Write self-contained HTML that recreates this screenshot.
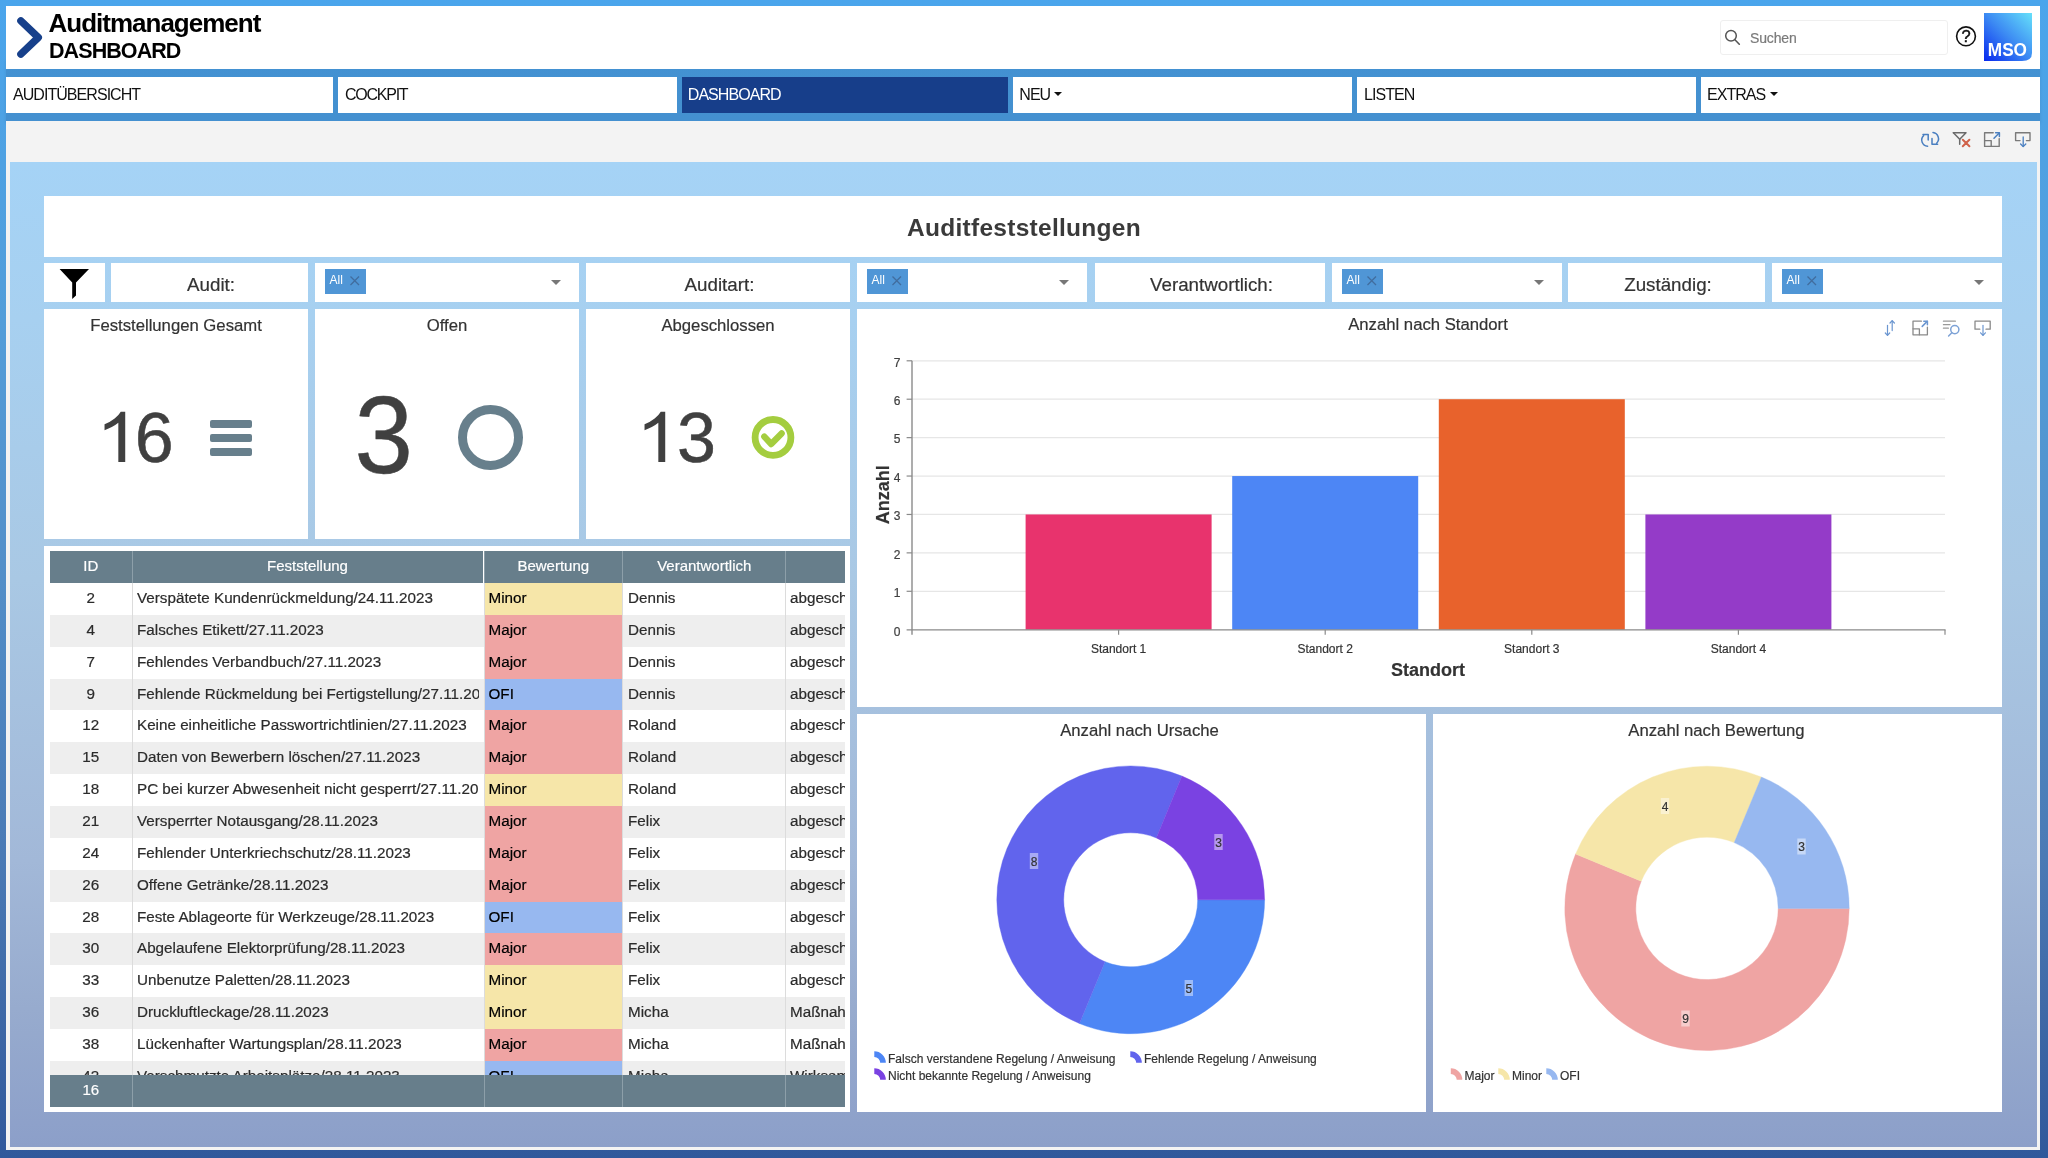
<!DOCTYPE html>
<html lang="de">
<head>
<meta charset="utf-8">
<title>Auditmanagement Dashboard</title>
<style>
*{box-sizing:border-box;margin:0;padding:0}
html,body{width:2048px;height:1158px;overflow:hidden}
body{font-family:"Liberation Sans",sans-serif;color:#333;background:linear-gradient(to bottom,rgb(74,165,236) 0%,rgb(82,157,217) 27.7%,rgb(82,142,200) 50%,rgb(74,122,181) 74%,rgb(63,105,167) 87%,rgb(48,88,155) 100%);position:relative;will-change:transform}
.abs{position:absolute}
.w{background:#fff}
/* header */
#hdr{left:6px;top:6px;width:2034px;height:63px;background:#fff}
#band{left:6px;top:60px;width:2034px;height:64px;background:rgba(0,10,40,.115);box-shadow:0 0 3px rgba(0,10,40,.1)}
#hdr .t1{left:42.5px;top:2px;font-size:26px;font-weight:bold;color:#000;line-height:30px;white-space:nowrap;letter-spacing:-1px}
#hdr .t2{left:43px;top:32px;font-size:21.5px;font-weight:bold;color:#000;line-height:26px;white-space:nowrap;letter-spacing:-.92px}
/* nav */
.nav{top:77px;height:36px;background:#fff;font-size:16px;line-height:36px;color:#111;padding-left:7px;white-space:nowrap;letter-spacing:-.95px}
.nav.act{background:#173e8a;color:#fff}
.nav .car{display:inline-block;width:0;height:0;border-left:4px solid transparent;border-right:4px solid transparent;border-top:4.5px solid #111;vertical-align:middle;margin-left:4px;margin-top:-3px}
/* work area */
#grey{left:6px;top:121px;width:2034px;height:1029px;background:#f3f3f3}
#panel{left:10px;top:162px;width:2027px;height:985px;background:linear-gradient(to bottom,rgb(165,211,246) 0%,rgb(167,208,240) 16%,rgb(169,200,228) 42.4%,rgb(162,184,216) 70.9%,rgb(151,171,206) 86%,rgb(140,159,201) 100%)}
/* cards */
.card{background:#fff}
.flabel{top:263px;height:39.3px;background:#fff;font-size:18.75px;line-height:39px;text-align:center;color:#333;padding-top:2px;padding-left:3px}
.fsel{top:263px;height:39.3px;background:#fff}
.tag{left:10px;top:6px;width:41px;height:25px;background:#5096d6;color:#fff;font-size:12px;line-height:23px;padding-left:4.6px;letter-spacing:0}
.tag i{position:absolute;left:23px;top:6px;width:11px;height:11px}
.fsel .dd{right:18px;top:17px;width:0;height:0;border-left:5.5px solid transparent;border-right:5.5px solid transparent;border-top:5.5px solid #777}
.kv{color:#404040;white-space:nowrap;-webkit-text-stroke:.5px #404040}
.kt{top:7.3px;left:0;width:100%;text-align:center;font-size:16.7px;line-height:20px;color:#333}

#tbl{left:50px;top:551px;width:794.5px;height:556px;overflow:hidden;font-size:15.22px;color:#2b2b2b;-webkit-text-stroke:.2px}
#tbl .th{top:0;height:32px;background:#677e8b;color:#fff;text-align:center;line-height:30px;font-size:15px}
#tb{left:0;top:32px;width:795px;height:492px;overflow:hidden}
#tbl .r{left:0;width:795px;height:31.86px;background:#fff;line-height:30.6px;white-space:nowrap}
#tbl .r.alt{background:#eee}
#tbl .c{top:0;height:31.86px;overflow:hidden}
.c1{left:0;width:81.5px;text-align:center}
.c2{left:87px;width:342px}
.c3{left:433.5px;width:138.7px;padding-left:5px;color:#000}
.c4{left:573px;width:162.5px;padding-left:5px}
.c5{left:736px;width:59px;padding-left:4px}
.minor{background:#f6e6a9}.major{background:#efa4a3}.ofi{background:#97b8f0}
.vl{top:0;width:1px;height:492px;background:#dcdcdc}
.hl{top:0;width:1px;height:32px;background:#8d9fa9}
.tf{left:0;top:524px;width:795px;height:32px;background:#677e8b}
.flabel,.kt{-webkit-text-stroke:.2px}
#bar text,#d1 text,#d2 text{stroke:#333;stroke-width:.2px}
</style>
</head>
<body>
<div id="band" class="abs"></div>
<!-- HEADER -->
<div id="hdr" class="abs">
  <svg class="abs" style="left:8px;top:8px" width="34" height="48" viewBox="0 0 34 48"><path d="M6.9 6.9 L24.3 23.5 L6.9 40.1" fill="none" stroke="#17408b" stroke-width="7.4" stroke-linecap="round" stroke-linejoin="round"/></svg>
  <div class="abs t1">Auditmanagement</div>
  <div class="abs t2">DASHBOARD</div>
  <div class="abs" style="left:1714px;top:14px;width:228px;height:35px;border:1px solid #efefef;border-radius:3px"></div>
  <svg class="abs" style="left:1716px;top:20px" width="24" height="24" viewBox="0 0 24 24"><circle cx="9" cy="9.8" r="5.3" fill="none" stroke="#555" stroke-width="1.5"/><path d="M12.9 13.8 L17.3 18.2" stroke="#555" stroke-width="1.6" stroke-linecap="round"/></svg>
  <div class="abs" style="left:1744px;top:22.7px;font-size:14px;line-height:18px;color:#7a7a7a;letter-spacing:-.15px;-webkit-text-stroke:.2px">Suchen</div>
  <svg class="abs" style="left:1948px;top:18px" width="24" height="24" viewBox="0 0 24 24"><circle cx="12" cy="12.3" r="9.4" fill="none" stroke="#111" stroke-width="1.6"/><text x="12" y="18.2" text-anchor="middle" font-family="Liberation Sans, sans-serif" font-size="16.5" fill="#111" stroke="#111" stroke-width=".45">?</text></svg>
  <svg class="abs" style="left:1978px;top:7px" width="48" height="48" viewBox="0 0 48 48"><defs><linearGradient id="lg" x1="1" y1="0" x2="0" y2="1"><stop offset="0" stop-color="#66e0fa"/><stop offset=".5" stop-color="#3c8af3"/><stop offset="1" stop-color="#0828ee"/></linearGradient></defs><path d="M0 0 H48 V40 Q48 48 38 48 H0 Z" fill="url(#lg)"/><text x="3.8" y="42.6" textLength="39.2" lengthAdjust="spacingAndGlyphs" font-family="Liberation Sans, sans-serif" font-weight="bold" font-size="18.5" fill="#fff">MSO</text></svg>

</div>
<!-- NAV -->
<div class="abs nav" style="left:6px;width:327px">AUDITÜBERSICHT</div>
<div class="abs nav" style="left:338px;width:339px;letter-spacing:-1.25px">COCKPIT</div>
<div class="abs nav act" style="left:682px;width:326px;padding-left:5.8px">DASHBOARD</div>
<div class="abs nav" style="left:1013px;width:339px;padding-left:6.3px">NEU<span class="car"></span></div>
<div class="abs nav" style="left:1357px;width:339px">LISTEN</div>
<div class="abs nav" style="left:1701px;width:339px;padding-left:6px">EXTRAS<span class="car" style="margin-left:5px"></span></div>
<!-- WORK AREA -->
<div id="grey" class="abs"></div>
<div id="panel" class="abs"></div>
<!-- TITLE -->
<div class="abs card" style="left:44px;top:196px;width:1958px;height:61px;text-align:center;font-size:24.5px;letter-spacing:.28px;font-weight:bold;line-height:61px;padding:.5px 0 0 2px;color:#3a3a3a">Auditfeststellungen</div>
<!-- FILTER ROW -->
<div class="abs card" style="left:44px;top:263px;width:61px;height:39.3px" id="ficon"><svg class="abs" style="left:14px;top:5px" width="34" height="32" viewBox="0 0 34 32"><path d="M1.6 1.1 H31 L18 14.4 V27.4 L14.2 30.9 V14.4 Z" fill="#000"/></svg></div>
<div class="abs flabel" style="left:111px;width:197px">Audit:</div>
<div class="abs fsel" style="left:315px;width:264px"><div class="abs tag">All<svg class="abs" style="left:24px;top:6px" width="12" height="12" viewBox="0 0 12 12"><path d="M1.5 1.5 L10 10 M10 1.5 L1.5 10" stroke="#416d9f" stroke-width="1.3" fill="none"/></svg></div><div class="abs dd"></div></div>
<div class="abs flabel" style="left:586px;width:264px">Auditart:</div>
<div class="abs fsel" style="left:857px;width:230px"><div class="abs tag">All<svg class="abs" style="left:24px;top:6px" width="12" height="12" viewBox="0 0 12 12"><path d="M1.5 1.5 L10 10 M10 1.5 L1.5 10" stroke="#416d9f" stroke-width="1.3" fill="none"/></svg></div><div class="abs dd"></div></div>
<div class="abs flabel" style="left:1095px;width:230px">Verantwortlich:</div>
<div class="abs fsel" style="left:1332px;width:230px"><div class="abs tag">All<svg class="abs" style="left:24px;top:6px" width="12" height="12" viewBox="0 0 12 12"><path d="M1.5 1.5 L10 10 M10 1.5 L1.5 10" stroke="#416d9f" stroke-width="1.3" fill="none"/></svg></div><div class="abs dd"></div></div>
<div class="abs flabel" style="left:1568px;width:197px">Zuständig:</div>
<div class="abs fsel" style="left:1772px;width:230px"><div class="abs tag">All<svg class="abs" style="left:24px;top:6px" width="12" height="12" viewBox="0 0 12 12"><path d="M1.5 1.5 L10 10 M10 1.5 L1.5 10" stroke="#416d9f" stroke-width="1.3" fill="none"/></svg></div><div class="abs dd"></div></div>
<!-- KPI CARDS -->
<div class="abs card" style="left:44px;top:308.8px;width:264px;height:230.2px" id="k1"><div class="abs kt">Feststellungen Gesamt</div><svg class="abs" style="left:51.5px;top:153.2px;overflow:visible" width="1" height="1"><path transform="scale(0.0383,-0.0341797)" d="M763 0H583V1147Q518 1085 412.5 1023Q307 961 223 930V1104Q374 1175 487 1276Q600 1377 647 1472H763Z" fill="#404040"/></svg><div class="abs kv" style="left:90.7px;top:88.95px;font-size:70px;line-height:80px">6</div><div class="abs" style="left:166px;top:111px;width:42px;height:8px;border-radius:2px;background:#677f8c"></div><div class="abs" style="left:166px;top:125px;width:42px;height:8px;border-radius:2px;background:#677f8c"></div><div class="abs" style="left:166px;top:139px;width:42px;height:8px;border-radius:2px;background:#677f8c"></div></div>
<div class="abs card" style="left:315px;top:308.8px;width:264px;height:230.2px" id="k2"><div class="abs kt">Offen</div><div class="abs kv" style="left:37.5px;top:64.5px;font-size:110px;line-height:124px;transform:scaleX(.955);transform-origin:50% 50%">3</div><div class="abs" style="left:143px;top:96px;width:65px;height:65px;border-radius:50%;border:9.5px solid #677f8c"></div></div>
<div class="abs card" style="left:586px;top:308.8px;width:264px;height:230.2px" id="k3"><div class="abs kt">Abgeschlossen</div><svg class="abs" style="left:50px;top:153.2px;overflow:visible" width="1" height="1"><path transform="scale(0.0383,-0.0341797)" d="M763 0H583V1147Q518 1085 412.5 1023Q307 961 223 930V1104Q374 1175 487 1276Q600 1377 647 1472H763Z" fill="#404040"/></svg><div class="abs kv" style="left:90.9px;top:88.95px;font-size:70px;line-height:80px">3</div><svg class="abs" style="left:165px;top:106px" width="44" height="44" viewBox="0 0 44 44"><circle cx="22" cy="22.4" r="17.9" fill="none" stroke="#a4cd3f" stroke-width="6.8"/><path d="M13.3 21.6 L20.2 29 L30.6 18.4" fill="none" stroke="#a4cd3f" stroke-width="6.4" stroke-linecap="round" stroke-linejoin="round"/></svg></div>
<!-- TABLE CARD -->
<div class="abs card" style="left:44px;top:545.5px;width:806px;height:566.5px" id="tcard"></div>
<div class="abs" id="tbl">
<div class="abs th" style="left:0;width:81.5px">ID</div><div class="abs th" style="left:82px;width:351px">Feststellung</div><div class="abs th" style="left:434px;width:138.5px">Bewertung</div><div class="abs th" style="left:573px;width:162.5px">Verantwortlich</div><div class="abs th" style="left:736px;width:59px"></div>
<div class="abs" id="tb">
<div class="abs r" style="top:0.0px"><div class="abs c c1">2</div><div class="abs c c2">Verspätete Kundenrückmeldung/24.11.2023</div><div class="abs c c3 minor">Minor</div><div class="abs c c4">Dennis</div><div class="abs c c5">abgeschlossen</div></div>
<div class="abs r alt" style="top:31.86px"><div class="abs c c1">4</div><div class="abs c c2">Falsches Etikett/27.11.2023</div><div class="abs c c3 major">Major</div><div class="abs c c4">Dennis</div><div class="abs c c5">abgeschlossen</div></div>
<div class="abs r" style="top:63.72px"><div class="abs c c1">7</div><div class="abs c c2">Fehlendes Verbandbuch/27.11.2023</div><div class="abs c c3 major">Major</div><div class="abs c c4">Dennis</div><div class="abs c c5">abgeschlossen</div></div>
<div class="abs r alt" style="top:95.58px"><div class="abs c c1">9</div><div class="abs c c2">Fehlende Rückmeldung bei Fertigstellung/27.11.2023</div><div class="abs c c3 ofi">OFI</div><div class="abs c c4">Dennis</div><div class="abs c c5">abgeschlossen</div></div>
<div class="abs r" style="top:127.44px"><div class="abs c c1">12</div><div class="abs c c2">Keine einheitliche Passwortrichtlinien/27.11.2023</div><div class="abs c c3 major">Major</div><div class="abs c c4">Roland</div><div class="abs c c5">abgeschlossen</div></div>
<div class="abs r alt" style="top:159.3px"><div class="abs c c1">15</div><div class="abs c c2">Daten von Bewerbern löschen/27.11.2023</div><div class="abs c c3 major">Major</div><div class="abs c c4">Roland</div><div class="abs c c5">abgeschlossen</div></div>
<div class="abs r" style="top:191.16px"><div class="abs c c1">18</div><div class="abs c c2">PC bei kurzer Abwesenheit nicht gesperrt/27.11.2023</div><div class="abs c c3 minor">Minor</div><div class="abs c c4">Roland</div><div class="abs c c5">abgeschlossen</div></div>
<div class="abs r alt" style="top:223.02px"><div class="abs c c1">21</div><div class="abs c c2">Versperrter Notausgang/28.11.2023</div><div class="abs c c3 major">Major</div><div class="abs c c4">Felix</div><div class="abs c c5">abgeschlossen</div></div>
<div class="abs r" style="top:254.88px"><div class="abs c c1">24</div><div class="abs c c2">Fehlender Unterkriechschutz/28.11.2023</div><div class="abs c c3 major">Major</div><div class="abs c c4">Felix</div><div class="abs c c5">abgeschlossen</div></div>
<div class="abs r alt" style="top:286.74px"><div class="abs c c1">26</div><div class="abs c c2">Offene Getränke/28.11.2023</div><div class="abs c c3 major">Major</div><div class="abs c c4">Felix</div><div class="abs c c5">abgeschlossen</div></div>
<div class="abs r" style="top:318.6px"><div class="abs c c1">28</div><div class="abs c c2">Feste Ablageorte für Werkzeuge/28.11.2023</div><div class="abs c c3 ofi">OFI</div><div class="abs c c4">Felix</div><div class="abs c c5">abgeschlossen</div></div>
<div class="abs r alt" style="top:350.46px"><div class="abs c c1">30</div><div class="abs c c2">Abgelaufene Elektorprüfung/28.11.2023</div><div class="abs c c3 major">Major</div><div class="abs c c4">Felix</div><div class="abs c c5">abgeschlossen</div></div>
<div class="abs r" style="top:382.32px"><div class="abs c c1">33</div><div class="abs c c2">Unbenutze Paletten/28.11.2023</div><div class="abs c c3 minor">Minor</div><div class="abs c c4">Felix</div><div class="abs c c5">abgeschlossen</div></div>
<div class="abs r alt" style="top:414.18px"><div class="abs c c1">36</div><div class="abs c c2">Druckluftleckage/28.11.2023</div><div class="abs c c3 minor">Minor</div><div class="abs c c4">Micha</div><div class="abs c c5">Maßnahme offen</div></div>
<div class="abs r" style="top:446.04px"><div class="abs c c1">38</div><div class="abs c c2">Lückenhafter Wartungsplan/28.11.2023</div><div class="abs c c3 major">Major</div><div class="abs c c4">Micha</div><div class="abs c c5">Maßnahme offen</div></div>
<div class="abs r alt" style="top:477.9px"><div class="abs c c1">42</div><div class="abs c c2">Verschmutzte Arbeitsplätze/28.11.2023</div><div class="abs c c3 ofi">OFI</div><div class="abs c c4">Micha</div><div class="abs c c5">Wirksamkeit offen</div></div>
<div class="abs vl" style="left:81.5px"></div><div class="abs vl" style="left:433.5px"></div><div class="abs vl" style="left:572px"></div><div class="abs vl" style="left:735px"></div>
</div>
<div class="abs tf"><div class="abs th" style="left:0;top:0;width:81.5px">16</div><div class="abs hl" style="left:81.5px"></div><div class="abs hl" style="left:433.5px"></div><div class="abs hl" style="left:572px"></div><div class="abs hl" style="left:735px"></div></div>
<div class="abs hl" style="left:81.5px;top:0"></div><div class="abs hl" style="left:433.5px;top:0"></div><div class="abs hl" style="left:572px;top:0"></div><div class="abs hl" style="left:735px;top:0"></div>
</div>
<!-- BAR CHART CARD -->
<div class="abs card" style="left:857px;top:309px;width:1145px;height:398px" id="bar"><svg class="abs" style="left:0;top:0" width="1145" height="398" viewBox="0 0 1145 398" font-family="Liberation Sans, sans-serif">
<line x1="55" x2="1088" y1="282.29" y2="282.29" stroke="#e6e6e6" stroke-width="1.2"/>
<line x1="55" x2="1088" y1="243.87" y2="243.87" stroke="#e6e6e6" stroke-width="1.2"/>
<line x1="55" x2="1088" y1="205.46" y2="205.46" stroke="#e6e6e6" stroke-width="1.2"/>
<line x1="55" x2="1088" y1="167.04" y2="167.04" stroke="#e6e6e6" stroke-width="1.2"/>
<line x1="55" x2="1088" y1="128.63" y2="128.63" stroke="#e6e6e6" stroke-width="1.2"/>
<line x1="55" x2="1088" y1="90.21" y2="90.21" stroke="#e6e6e6" stroke-width="1.2"/>
<line x1="55" x2="1088" y1="51.80" y2="51.80" stroke="#e6e6e6" stroke-width="1.2"/>
<rect x="168.60" y="205.46" width="186" height="115.24" fill="#e8336d"/>
<rect x="375.20" y="167.04" width="186" height="153.66" fill="#4d86f5"/>
<rect x="581.80" y="90.21" width="186" height="230.49" fill="#e8622c"/>
<rect x="788.40" y="205.46" width="186" height="115.24" fill="#943bc8"/>
<line x1="55" x2="55" y1="51.8" y2="325.7" stroke="#8a8a8a" stroke-width="1.4"/>
<line x1="49.6" x2="1088.5" y1="320.9" y2="320.9" stroke="#8a8a8a" stroke-width="1.4"/>
<line x1="1088" x2="1088" y1="320.7" y2="325.7" stroke="#8a8a8a" stroke-width="1.2"/>
<line x1="49.6" x2="55" y1="282.29" y2="282.29" stroke="#8a8a8a" stroke-width="1.2"/>
<line x1="49.6" x2="55" y1="243.87" y2="243.87" stroke="#8a8a8a" stroke-width="1.2"/>
<line x1="49.6" x2="55" y1="205.46" y2="205.46" stroke="#8a8a8a" stroke-width="1.2"/>
<line x1="49.6" x2="55" y1="167.04" y2="167.04" stroke="#8a8a8a" stroke-width="1.2"/>
<line x1="49.6" x2="55" y1="128.63" y2="128.63" stroke="#8a8a8a" stroke-width="1.2"/>
<line x1="49.6" x2="55" y1="90.21" y2="90.21" stroke="#8a8a8a" stroke-width="1.2"/>
<line x1="49.6" x2="55" y1="51.80" y2="51.80" stroke="#8a8a8a" stroke-width="1.2"/>
<text x="43.5" y="326.50" font-size="12" fill="#444" text-anchor="end">0</text>
<text x="43.5" y="288.09" font-size="12" fill="#444" text-anchor="end">1</text>
<text x="43.5" y="249.67" font-size="12" fill="#444" text-anchor="end">2</text>
<text x="43.5" y="211.26" font-size="12" fill="#444" text-anchor="end">3</text>
<text x="43.5" y="172.84" font-size="12" fill="#444" text-anchor="end">4</text>
<text x="43.5" y="134.43" font-size="12" fill="#444" text-anchor="end">5</text>
<text x="43.5" y="96.01" font-size="12" fill="#444" text-anchor="end">6</text>
<text x="43.5" y="57.60" font-size="12" fill="#444" text-anchor="end">7</text>
<line x1="261.60" x2="261.60" y1="320.7" y2="325.7" stroke="#8a8a8a" stroke-width="1.2"/>
<text x="261.60" y="344.3" font-size="12" fill="#333" text-anchor="middle">Standort 1</text>
<line x1="468.20" x2="468.20" y1="320.7" y2="325.7" stroke="#8a8a8a" stroke-width="1.2"/>
<text x="468.20" y="344.3" font-size="12" fill="#333" text-anchor="middle">Standort 2</text>
<line x1="674.80" x2="674.80" y1="320.7" y2="325.7" stroke="#8a8a8a" stroke-width="1.2"/>
<text x="674.80" y="344.3" font-size="12" fill="#333" text-anchor="middle">Standort 3</text>
<line x1="881.40" x2="881.40" y1="320.7" y2="325.7" stroke="#8a8a8a" stroke-width="1.2"/>
<text x="881.40" y="344.3" font-size="12" fill="#333" text-anchor="middle">Standort 4</text>
<text x="571" y="367" font-size="18" font-weight="bold" fill="#333" text-anchor="middle">Standort</text>
<text transform="translate(31.5,185.8) rotate(-90)" font-size="18" font-weight="bold" fill="#333" text-anchor="middle">Anzahl</text>
<text x="571" y="21.3" font-size="16.7" fill="#333" text-anchor="middle">Anzahl nach Standort</text>
</svg></div>
<!-- DONUT CARDS -->
<div class="abs card" style="left:857px;top:714px;width:569px;height:398px" id="d1"><svg class="abs" style="left:0;top:1px" width="568" height="397" viewBox="0 0 568 397" font-family="Liberation Sans, sans-serif">
<path d="M407.60 184.80 A133.9 133.9 0 0 1 222.46 308.51 L248.06 246.70 A67 67 0 0 0 340.70 184.80 Z" fill="#4d86f5" stroke="#4d86f5" stroke-width="0.4"/>
<path d="M222.46 308.51 A133.9 133.9 0 1 1 324.94 61.09 L299.34 122.90 A67 67 0 1 0 248.06 246.70 Z" fill="#6164ed" stroke="#6164ed" stroke-width="0.4"/>
<path d="M324.94 61.09 A133.9 133.9 0 0 1 407.60 184.80 L340.70 184.80 A67 67 0 0 0 299.34 122.90 Z" fill="#7a42e2" stroke="#7a42e2" stroke-width="0.4"/>
<rect x="327.6" y="265.0" width="8.4" height="16" fill="rgba(255,255,255,.45)"/><text x="331.8" y="277.8" font-size="12" fill="#333" text-anchor="middle">5</text>
<rect x="172.8" y="138.0" width="8.4" height="16" fill="rgba(255,255,255,.45)"/><text x="177.0" y="150.8" font-size="12" fill="#333" text-anchor="middle">8</text>
<rect x="357.3" y="119.0" width="8.4" height="16" fill="rgba(255,255,255,.45)"/><text x="361.5" y="131.8" font-size="12" fill="#333" text-anchor="middle">3</text>
<text x="282.5" y="20.5" font-size="16.7" fill="#333" text-anchor="middle">Anzahl nach Ursache</text>
<path d="M17.3 336.3 A11.5 11.5 0 0 1 28.8 347.8 L23.2 347.8 A5.9 5.9 0 0 0 17.3 341.9 Z" fill="#4d86f5"/>
<text x="31" y="348.20000000000005" font-size="12" fill="#333">Falsch verstandene Regelung / Anweisung</text>
<path d="M273.3 336.3 A11.5 11.5 0 0 1 284.8 347.8 L279.2 347.8 A5.9 5.9 0 0 0 273.3 341.9 Z" fill="#6164ed"/>
<text x="287" y="348.20000000000005" font-size="12" fill="#333">Fehlende Regelung / Anweisung</text>
<path d="M17.3 353.3 A11.5 11.5 0 0 1 28.8 364.8 L23.2 364.8 A5.9 5.9 0 0 0 17.3 358.9 Z" fill="#7a42e2"/>
<text x="31" y="365.4000000000001" font-size="12" fill="#333">Nicht bekannte Regelung / Anweisung</text>
</svg></div>
<div class="abs card" style="left:1433px;top:714px;width:569px;height:398px" id="d2"><svg class="abs" style="left:-1px;top:1px" width="570" height="397" viewBox="0 0 570 397" font-family="Liberation Sans, sans-serif">
<path d="M417.20 193.40 A142.2 142.2 0 1 1 143.62 138.98 L209.22 166.15 A71.2 71.2 0 1 0 346.20 193.40 Z" fill="#efa4a3" stroke="#efa4a3" stroke-width="0.4"/>
<path d="M143.62 138.98 A142.2 142.2 0 0 1 329.42 62.02 L302.25 127.62 A71.2 71.2 0 0 0 209.22 166.15 Z" fill="#f6e6a9" stroke="#f6e6a9" stroke-width="0.4"/>
<path d="M329.42 62.02 A142.2 142.2 0 0 1 417.20 193.40 L346.20 193.40 A71.2 71.2 0 0 0 302.25 127.62 Z" fill="#97b8f0" stroke="#97b8f0" stroke-width="0.4"/>
<rect x="249.3" y="295.5" width="8.4" height="16" fill="rgba(255,255,255,.45)"/><text x="253.5" y="308.3" font-size="12" fill="#333" text-anchor="middle">9</text>
<rect x="228.8" y="83.0" width="8.4" height="16" fill="rgba(255,255,255,.45)"/><text x="233.0" y="95.8" font-size="12" fill="#333" text-anchor="middle">4</text>
<rect x="365.3" y="123.5" width="8.4" height="16" fill="rgba(255,255,255,.45)"/><text x="369.5" y="136.3" font-size="12" fill="#333" text-anchor="middle">3</text>
<text x="284.5" y="20.5" font-size="16.7" fill="#333" text-anchor="middle">Anzahl nach Bewertung</text>
<path d="M18.8 353.3 A11.5 11.5 0 0 1 30.3 364.8 L24.7 364.8 A5.9 5.9 0 0 0 18.8 358.9 Z" fill="#efa4a3"/>
<text x="32.5" y="365.4000000000001" font-size="12" fill="#333">Major</text>
<path d="M66.3 353.3 A11.5 11.5 0 0 1 77.8 364.8 L72.2 364.8 A5.9 5.9 0 0 0 66.3 358.9 Z" fill="#f6e6a9"/>
<text x="80" y="365.4000000000001" font-size="12" fill="#333">Minor</text>
<path d="M114.3 353.3 A11.5 11.5 0 0 1 125.8 364.8 L120.2 364.8 A5.9 5.9 0 0 0 114.3 358.9 Z" fill="#97b8f0"/>
<text x="128" y="365.4000000000001" font-size="12" fill="#333">OFI</text>
</svg></div>

<!-- TOOLBAR ICONS -->
<svg class="abs" style="left:1916px;top:128px" width="120" height="24" viewBox="1916 128 120 24" fill="none" stroke-linecap="round" stroke-linejoin="round">
  <g stroke="#4a7fc0" stroke-width="1.5">
    <path d="M1927.6 146.2 A6.2 6.2 0 0 1 1923.6 135.6"/><path d="M1923 134.5 H1928.2 V140"/>
    <path d="M1933 132.6 A6.2 6.2 0 0 1 1936.6 143.2"/><path d="M1937.6 144.2 H1932 V138.6"/>
  </g>
  <g stroke="#6a6a6a" stroke-width="1.5"><path d="M1953.4 132.8 H1966 L1959.7 139.2 V144.2"/><path d="M1953.4 132.8 L1959.7 139.2"/></g>
  <path d="M1962.8 139.8 L1969.4 146.2 M1969.4 139.8 L1962.8 146.2" stroke="#d0624a" stroke-width="2"/>
  <g stroke="#7a7a7a" stroke-width="1.4"><path d="M1993.2 132.8 H1984.6 V146.4 H1999.2 V138.6"/><path d="M1984.6 140.6 H1991.2 V146.4"/></g>
  <g stroke="#4a7fc0" stroke-width="1.5"><path d="M1994 138.2 L1999.2 133"/><path d="M1995.6 132.8 H1999.4 V136.6"/></g>
  <path d="M2020 140.6 H2015.6 V132.8 H2030 V140.6 H2026.4" stroke="#7a7a7a" stroke-width="1.4"/>
  <g stroke="#4a7fc0" stroke-width="1.3"><path d="M2023.2 137 V146.4"/><path d="M2020.6 144 L2023.2 146.6 L2025.8 144"/></g>
</svg>
<!-- CHART ICONS -->
<svg class="abs" style="left:1880px;top:316px" width="116" height="24" viewBox="1880 316 116 24" fill="none" stroke-linecap="round" stroke-linejoin="round">
  <g stroke="#6b96d0" stroke-width="1.2"><path d="M1887.5 325.4 V335.2"/><path d="M1885.3 333 L1887.5 335.4 L1889.7 333"/><path d="M1892.2 330.6 V320.8"/><path d="M1890 323 L1892.2 320.6 L1894.4 323"/></g>
  <g stroke="#8a8a8a" stroke-width="1.3"><path d="M1921.4 321.2 H1913 V334.8 H1927.4 V327.2"/><path d="M1913 328.8 H1919.4 V334.8"/></g>
  <g stroke="#6b96d0" stroke-width="1.5"><path d="M1922.2 326.4 L1927.2 321.4"/><path d="M1923.8 321.2 H1927.4 V324.8"/></g>
  <g stroke="#9a9a9a" stroke-width="1.2"><path d="M1943.4 321.2 H1955.4"/><path d="M1943.4 324.7 H1950"/><path d="M1943.4 328.2 H1948.4"/></g>
  <g stroke="#7da2d6" stroke-width="1.5"><circle cx="1954.8" cy="329.6" r="4.1"/><path d="M1951.8 332.8 L1948.6 336"/></g>
  <path d="M1979.8 329.2 H1975 V321.2 H1990.2 V329.2 H1986" stroke="#8a8a8a" stroke-width="1.3"/>
  <g stroke="#6b96d0" stroke-width="1.2"><path d="M1983 325.4 V335.2"/><path d="M1980.6 332.8 L1983 335.4 L1985.4 332.8"/></g>
</svg>
</body>
</html>
